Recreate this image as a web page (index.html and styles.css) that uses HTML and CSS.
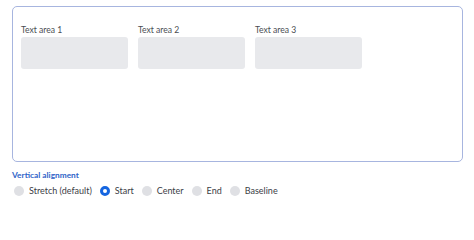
FILE: index.html
```html
<!DOCTYPE html>
<html>
<head>
<meta charset="utf-8">
<link rel="stylesheet" href="styles.css">
</head>
<body>
<div class="page">
  <div class="frame">
    <div class="field">
      <div class="label">Text area 1</div>
      <div class="area"></div>
    </div>
    <div class="field">
      <div class="label">Text area 2</div>
      <div class="area"></div>
    </div>
    <div class="field">
      <div class="label">Text area 3</div>
      <div class="area"></div>
    </div>
  </div>
  <div class="group">
    <div class="group-title">Vertical alignment</div>
    <div class="radios">
      <label class="radio"><span class="dot"></span><span>Stretch (default)</span></label>
      <label class="radio"><span class="dot checked"></span><span>Start</span></label>
      <label class="radio"><span class="dot"></span><span>Center</span></label>
      <label class="radio"><span class="dot"></span><span>End</span></label>
      <label class="radio"><span class="dot"></span><span>Baseline</span></label>
    </div>
  </div>
</div>
</body>
</html>
```
FILE: styles.css
```css
* { box-sizing: border-box; }
html, body { margin: 0; padding: 0; background: #fff; }
body { font-family: Lato, "Noto Sans", sans-serif; color: #3b3f45; }
.page { padding: 6px 12px 0 12px; }
.frame {
  width: 451px;
  height: 156px;
  border: 1px solid #a7b5df;
  border-radius: 5px;
  padding: 18px 8px 0 8px;
  display: flex;
  align-items: flex-start;
  gap: 10px;
}
.field { display: flex; flex-direction: column; gap: 1px; }
.label { font-size: 8.6px; line-height: 11px; color: #4a4d52; }
.area {
  width: 107px;
  height: 32px;
  background: #e8e9ec;
  border-radius: 3px;
}
.group { padding-top: 8px; }
.group-title {
  font-size: 8.3px;
  font-weight: 700;
  color: #2f64c8;
  line-height: 11px;
}
.radios { display: flex; gap: 8px; margin-top: 4px; align-items: center; padding-left: 2px; }
.radio {
  display: flex;
  align-items: center;
  gap: 5px;
  font-size: 9px;
  line-height: 12px;
  color: #3c4046;
}
.dot {
  width: 10px;
  height: 10px;
  border-radius: 50%;
  background: #dfe0e4;
  flex: none;
}
.dot.checked {
  background: #fff;
  border: 3px solid #1565e0;
}
```
